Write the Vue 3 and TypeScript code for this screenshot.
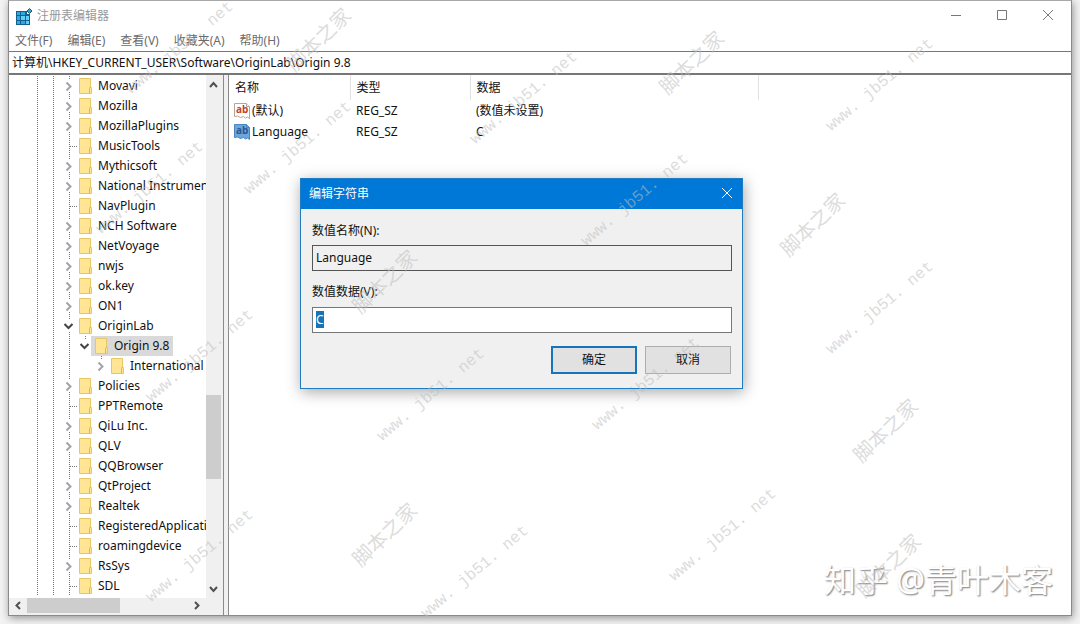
<script setup lang="ts">
import { onMounted, ref } from 'vue'

type Toggle = 'closed' | 'open' | 'leaf'

interface TreeItem {
  name: string
  toggle: Toggle
  guides: boolean[]
  nested?: boolean
  selected?: boolean
}

const base = [true, true]
const item = (name: string, toggle: Toggle = 'closed'): TreeItem => ({ name, toggle, guides: base })

const tree: TreeItem[] = [
  item('Movavi'),
  item('Mozilla'),
  item('MozillaPlugins'),
  item('MusicTools', 'leaf'),
  item('Mythicsoft'),
  item('National Instruments'),
  item('NavPlugin', 'leaf'),
  item('NCH Software'),
  item('NetVoyage'),
  item('nwjs'),
  item('ok.key'),
  item('ON1'),
  item('OriginLab', 'open'),
  { name: 'Origin 9.8', toggle: 'open', guides: [true, true, true], nested: true, selected: true },
  { name: 'International', toggle: 'closed', guides: [true, true, true, false], nested: true },
  item('Policies'),
  item('PPTRemote', 'leaf'),
  item('QiLu Inc.'),
  item('QLV'),
  item('QQBrowser', 'leaf'),
  item('QtProject'),
  item('Realtek'),
  item('RegisteredApplications', 'leaf'),
  item('roamingdevice', 'leaf'),
  item('RsSys'),
  item('SDL', 'leaf'),
]

const menus = ['文件(F)', '编辑(E)', '查看(V)', '收藏夹(A)', '帮助(H)']

const values = [
  { name: '(默认)', type: 'REG_SZ', data: '(数值未设置)', selected: false },
  { name: 'Language', type: 'REG_SZ', data: 'C', selected: true },
]

const url = 'www. jb51. net'
const site = '脚本之家'
const marks = [
  { text: url, x: 180, y: 48 },
  { text: url, x: 298, y: 148 },
  { text: url, x: 524, y: 98 },
  { text: url, x: 880, y: 85 },
  { text: url, x: 880, y: 308 },
  { text: url, x: 635, y: 200 },
  { text: url, x: 150, y: 188 },
  { text: url, x: 200, y: 356 },
  { text: url, x: 431, y: 395 },
  { text: url, x: 646, y: 384 },
  { text: url, x: 200, y: 556 },
  { text: url, x: 475, y: 572 },
  { text: url, x: 723, y: 535 },
  { text: site, x: 318, y: 39 },
  { text: site, x: 691, y: 62 },
  { text: site, x: 812, y: 224 },
  { text: site, x: 384, y: 281 },
  { text: site, x: 885, y: 430 },
  { text: site, x: 384, y: 534 },
  { text: site, x: 888, y: 565 },
]

const path = ref('计算机\\HKEY_CURRENT_USER\\Software\\OriginLab\\Origin 9.8')
const valueName = ref('Language')
const valueData = ref('C')
const dataField = ref<HTMLInputElement | null>(null)

onMounted(() => {
  dataField.value?.focus()
  dataField.value?.select()
})
</script>

<template>
  <div class="desktop">
    <main class="window">
      <header class="titlebar">
        <svg class="app-icon" viewBox="0 0 17 17" aria-hidden="true">
          <path d="M0 3h11v3h3v11H0z" fill="#14608f" />
          <path d="M1 4h3v3H1zM5 4h4v3H5zM1 8h3v4H1zM1 13h3v3H1zM5 13h4v3H5z" fill="#2fa9e0" />
          <path d="M5 8h4v4H5zM10 8h3v4h-3zM10 13h3v3h-3z" fill="#5fd0f7" />
          <path d="M13.5 0.500l2.500 2.500L13.500 5.500 11 3z" fill="#3fa3cf" stroke="#28566f" />
        </svg>
        <h1>注册表编辑器</h1>
        <div class="caption">
          <button type="button" aria-label="最小化">
            <svg viewBox="0 0 12 12"><path d="M1 5.500h10" /></svg>
          </button>
          <button type="button" aria-label="最大化">
            <svg viewBox="0 0 12 12"><path d="M1.500 .500h9v9h-9z" /></svg>
          </button>
          <button type="button" aria-label="关闭">
            <svg viewBox="0 0 12 12"><path d="M1 0l10 10M11 0L1 10" /></svg>
          </button>
        </div>
      </header>

      <nav class="menubar">
        <button v-for="m in menus" :key="m" type="button">{{ m }}</button>
      </nav>

      <input v-model="path" class="address" type="text" aria-label="地址" />

      <div class="panes">
        <section class="tree-pane">
          <ul class="tree">
            <li v-for="node in tree" :key="node.name">
              <svg v-for="(g, i) in node.guides" :key="i" class="cell" viewBox="0 0 16 20" aria-hidden="true">
                <path v-if="g" class="dots" d="M8.500 0v20" />
              </svg>
              <button class="toggle" type="button" :aria-label="node.name" :disabled="node.toggle === 'leaf'">
                <svg class="cell" viewBox="0 0 16 20" aria-hidden="true">
                  <template v-if="node.toggle === 'leaf'">
                    <path class="dots" d="M8.500 0v20M9 10.500h7" />
                  </template>
                  <template v-else>
                    <path class="dots" d="M8.500 0v4" />
                    <path v-if="!node.nested" class="dots" d="M8.500 16v4" />
                    <path v-if="node.toggle === 'closed'" class="chev" d="M5.500 6.500l4 4-4 4" />
                    <path v-else class="chev open" d="M3.500 8l4 4 4-4" />
                  </template>
                </svg>
              </button>
              <button class="node" :class="{ selected: node.selected }" type="button">
                <svg class="folder" viewBox="0 0 13 16" aria-hidden="true">
                  <path d="M.500.500h11v9h1v6H.500z" fill="#ffe594" stroke="#e6c765" />
                  <path d="M10.500 15.500v-5l1-1.500" fill="none" stroke="#d9b84f" />
                </svg>
                <span>{{ node.name }}</span>
              </button>
            </li>
          </ul>
          <div class="vbar">
            <svg viewBox="0 0 15 20"><path d="M4 12l3.500-4 3.500 4" /></svg>
            <div class="track"><div class="thumb"></div></div>
            <svg viewBox="0 0 15 20"><path d="M4 9l3.500 4 3.500-4" /></svg>
          </div>
          <div class="hbar">
            <svg viewBox="0 0 18 15"><path d="M11 4L7.500 7.500 11 11" /></svg>
            <div class="track"><div class="thumb"></div></div>
            <svg viewBox="0 0 18 15"><path d="M7 4l3.500 3.500L7 11" /></svg>
          </div>
          <div class="corner"></div>
        </section>

        <section class="list-pane">
          <table>
            <colgroup>
              <col class="c-name" />
              <col class="c-type" />
              <col class="c-data" />
              <col />
            </colgroup>
            <thead>
              <tr>
                <th scope="col">名称</th>
                <th scope="col">类型</th>
                <th scope="col">数据</th>
                <td></td>
              </tr>
            </thead>
            <tbody>
              <tr v-for="v in values" :key="v.name">
                <td class="name">
                  <div>
                    <svg :class="['value-icon', { on: v.selected }]" viewBox="0 0 16 16" aria-hidden="true">
                      <path class="sheet" d="M.500.500h12l3 3v12l-2-1.500-2 1-2-1.500-3 1-3-1.500-3 .500z" />
                      <path class="fold" d="M12.500.500v3h3" />
                      <text x="2" y="10">ab</text>
                    </svg>
                    {{ v.name }}
                  </div>
                </td>
                <td>{{ v.type }}</td>
                <td>{{ v.data }}</td>
                <td></td>
              </tr>
            </tbody>
          </table>
        </section>
      </div>
    </main>

    <form class="dialog" role="dialog" aria-labelledby="dlg-title" @submit.prevent>
      <header>
        <h2 id="dlg-title">编辑字符串</h2>
        <button type="button" aria-label="关闭">
          <svg viewBox="0 0 12 12"><path d="M1 0l10 10M11 0L1 10" /></svg>
        </button>
      </header>
      <div class="dialog-body">
        <label for="value-name">数值名称(N):</label>
        <input id="value-name" v-model="valueName" type="text" readonly />
        <label for="value-data">数值数据(V):</label>
        <input id="value-data" ref="dataField" v-model="valueData" type="text" />
        <div class="actions">
          <button class="primary" type="submit">确定</button>
          <button type="button">取消</button>
        </div>
      </div>
    </form>

    <div class="signature">知乎 @青叶木客</div>
    <div class="marks">
      <span
        v-for="(m, i) in marks"
        :key="i"
        :class="{ site: m.text === site }"
        :style="{ left: m.x + 'px', top: m.y + 'px' }"
      >{{ m.text }}</span>
    </div>
  </div>
</template>

<style>
body {
  margin: 0;
  background: #f3f3f3;
}
</style>

<style scoped>
* {
  box-sizing: border-box;
}

.desktop {
  position: relative;
  display: flex;
  height: 100vh;
  padding: 0 8px 8px;
  overflow: hidden;
  background: #f3f3f3;
  color: #111;
  font: 12px/16px 'Noto Sans', 'Noto Sans CJK SC', sans-serif;
}

button,
input {
  margin: 0;
  padding: 0;
  border: 0;
  border-radius: 0;
  outline: 0;
  background: none;
  color: inherit;
  font: inherit;
}

h1,
h2 {
  margin: 0;
  font-size: 12px;
  font-weight: 400;
}

.window {
  display: flex;
  flex: 1;
  flex-direction: column;
  min-width: 0;
  border: 1px solid #8a8a8a;
  border-top-color: #a8a8a8;
  background: #fff;
  box-shadow: 1px 2px 8px rgba(0, 0, 0, 0.4);
}

.titlebar {
  display: flex;
  align-items: center;
  height: 30px;
  padding-left: 7px;
  color: #999;
}

.app-icon {
  width: 17px;
  height: 17px;
  margin-right: 4px;
}

.caption {
  display: flex;
  margin-left: auto;
}

.caption button {
  display: grid;
  place-items: center;
  width: 46px;
  height: 30px;
}

.caption svg,
.dialog header svg {
  width: 12px;
  height: 12px;
  fill: none;
  stroke: #777;
}

.menubar {
  display: flex;
  gap: 15px;
  height: 20px;
  padding-left: 6px;
  color: #6b6b6b;
}

.address {
  height: 24px;
  padding: 0 3px 2px;
  border: 1px solid #777;
  border-width: 1px 0 2px;
  background: #fff;
}

.panes {
  display: flex;
  flex: 1;
  gap: 4px;
  min-height: 0;
  background: #f0f0f0;
}

.tree-pane {
  display: grid;
  grid-template-rows: minmax(0, 1fr) 17px;
  grid-template-columns: minmax(0, 1fr) 17px;
  flex: none;
  width: 215px;
  border-right: 1px solid #8a8a8a;
  background: #fff;
}

.tree {
  margin: 0;
  padding: 1px 0 0 20px;
  overflow: hidden;
  list-style: none;
}

.tree li {
  display: flex;
  height: 20px;
}

.cell {
  display: block;
  flex: none;
  width: 16px;
  height: 20px;
}

.dots {
  fill: none;
  stroke: #777;
  stroke-dasharray: 1 1;
}

.chev {
  fill: none;
  stroke: #a3a3ad;
  stroke-width: 2;
}

.chev.open {
  stroke: #444;
}

.node {
  display: flex;
  flex: none;
  gap: 6px;
  align-items: center;
  height: 20px;
  margin-left: -2px;
  padding: 0 4px;
  white-space: nowrap;
}

.node.selected {
  background: #d9d9d9;
}

.folder {
  width: 13px;
  height: 16px;
}

.vbar,
.hbar {
  display: flex;
  background: #f0f0f0;
}

.vbar {
  flex-direction: column;
  padding-right: 2px;
}

.hbar {
  padding-bottom: 2px;
}

.vbar svg,
.hbar svg {
  flex: none;
  fill: none;
  stroke: #505050;
  stroke-width: 2;
}

.vbar svg {
  width: 15px;
  height: 20px;
}

.hbar svg {
  width: 18px;
  height: 15px;
}

.track {
  display: flex;
  flex: 1;
}

.thumb {
  background: #cdcdcd;
}

.vbar .track {
  flex-direction: column;
  justify-content: flex-end;
  padding-bottom: 99px;
}

.vbar .thumb {
  height: 84px;
}

.hbar .thumb {
  width: 93px;
}

.corner {
  background: #f0f0f0;
}

.list-pane {
  flex: 1;
  min-width: 0;
  border-left: 1px solid #8a8a8a;
  background: #fff;
}

table {
  width: 100%;
  border-collapse: collapse;
  table-layout: fixed;
}

.c-name {
  width: 121px;
}

.c-type {
  width: 120px;
}

.c-data {
  width: 288px;
}

th,
td {
  height: 21px;
  padding: 0 6px;
  font-weight: 400;
  text-align: left;
}

th {
  height: 25px;
  border-right: 1px solid #e2e2e2;
}

td.name {
  padding: 0 0 0 5px;
}

td.name div {
  display: flex;
  gap: 2px;
  align-items: center;
}

.value-icon {
  width: 16px;
  height: 16px;
}

.value-icon path {
  fill: #fff;
  stroke: #b5a49d;
}

.value-icon text {
  fill: #c0452c;
  font: 700 10px 'Noto Sans', sans-serif;
}

.value-icon.on path {
  fill: #6ba6dd;
  stroke: #4a86bf;
}

.value-icon.on text {
  fill: #2b5795;
}

.dialog {
  position: absolute;
  top: 178px;
  left: 300px;
  width: 443px;
  border: 1px solid #1f7cc0;
  background: #f0f0f0;
  box-shadow: 1px 3px 14px rgba(0, 0, 0, 0.35);
}

.dialog header {
  display: flex;
  align-items: center;
  justify-content: space-between;
  height: 30px;
  padding: 0 9px 0 8px;
  background: #0078d7;
  color: #fff;
}

.dialog header button {
  display: grid;
  place-items: center;
}

.dialog header svg {
  stroke: #fff;
}

.dialog-body {
  display: flex;
  flex-direction: column;
  padding: 14px 10px 14px 11px;
}

.dialog-body label {
  line-height: 16px;
}

.dialog-body input {
  height: 26px;
  margin: 6px 0 13px;
  padding: 0 3px 2px;
  border: 1px solid #555;
  line-height: 17px;
}

.dialog-body #value-data {
  margin: 7px 0 13px;
  border-color: #777;
  background: #fff;
}

#value-data::selection {
  background: #1874b8;
  color: #fff;
}

.actions {
  display: flex;
  gap: 8px;
  justify-content: flex-end;
  padding-right: 1px;
}

.actions button {
  width: 86px;
  height: 28px;
  border: 1px solid #adadad;
  background: #e1e1e1;
}

.actions .primary {
  border: 2px solid #1874b8;
}

.signature {
  position: absolute;
  right: 27px;
  bottom: 22px;
  color: #fff;
  font-size: 32px;
  line-height: 44px;
  text-shadow: 1px 1px 1px #999, 1px 1px 2px #aaa;
}

.marks {
  position: absolute;
  inset: 0;
  pointer-events: none;
}

.marks span {
  position: absolute;
  color: rgba(190, 190, 190, 0.55);
  font: 16px/20px 'Liberation Mono', monospace;
  white-space: pre;
  transform: translate(-50%, -50%) rotate(-40deg);
}

.marks .site {
  font: 20px/24px 'Noto Sans CJK SC', sans-serif;
  transform: translate(-50%, -50%) rotate(-44deg);
}
</style>
